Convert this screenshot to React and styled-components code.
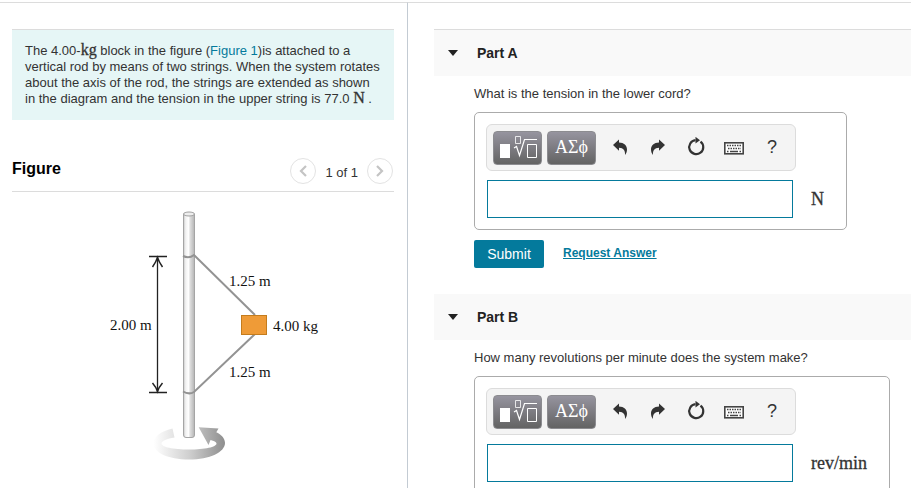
import React, { useState } from "react";
import styled, { createGlobalStyle, css } from "styled-components";

const GlobalStyle = createGlobalStyle`
  * {
    box-sizing: border-box;
  }
  body {
    margin: 0;
    background: #fff;
    color: #333;
    font-family: "Liberation Sans", Arial, sans-serif;
    font-size: 13px;
    line-height: 16px;
  }
  button, input {
    font-family: inherit;
  }
`;

const Page = styled.main`
  display: flex;
  height: 100vh;
  padding-top: 2px;
`;

const pane = css`
  border-top: 1px solid #dcdcdc;
  overflow-y: auto;
  scrollbar-width: none;
`;

const ProblemPane = styled.section`
  ${pane}
  flex: 0 0 408px;
  padding: 26px 13px 0 12px;
  border-right: 1px solid #c3cbd3;
`;

const AnswerPane = styled.section`
  ${pane}
  flex: 1;
  min-width: 0;
  padding: 26px 0 0 26px;
`;

const Intro = styled.p`
  margin: 0;
  padding: 13px;
  border-top: 1px solid #dcdcdc;
  background: #e6f6f6;
`;

const IntroLink = styled.a`
  color: #047a9c;
  text-decoration: none;
`;

const MathText = styled.span`
  font-family: "Liberation Serif", serif;
  font-size: ${(props) => (props.$large ? 18 : 16)}px;
  line-height: 1px;
  -webkit-text-stroke: 0.3px currentColor;
`;

const FigureHeader = styled.header`
  display: flex;
  align-items: center;
  justify-content: space-between;
  margin-top: 38px;
  padding: 0 1px 7px 0;
  border-bottom: 1px solid #dcdcdc;
`;

const FigureTitle = styled.h2`
  margin: 0;
  padding-bottom: 4px;
  color: #000;
  font-size: 16px;
  line-height: 20px;
`;

const Pager = styled.nav`
  display: flex;
  align-items: center;
  gap: 9px;
`;

const PagerCount = styled.span`
  padding-top: 4px;
`;

const PagerButton = styled.button`
  display: flex;
  align-items: center;
  justify-content: center;
  width: 26px;
  height: 26px;
  padding: 0;
  border: 1px solid #e3e3e3;
  border-radius: 50%;
  background: #fff;
`;

const Drawing = styled.svg`
  display: block;
  width: 100%;
  font-family: "Liberation Serif", serif;
  font-size: 15px;
`;

const Part = styled.section`
  margin-bottom: 26px;
`;

const PartHeader = styled.h2`
  margin: 0;
  border-top: ${(props) => (props.$first ? "1px solid #dcdcdc" : "0")};
  background: #f9f9f9;
  font-size: 14px;
`;

const PartToggle = styled.button`
  display: flex;
  align-items: center;
  gap: 19px;
  width: 100%;
  height: 46px;
  padding: 0 14px;
  border: 0;
  background: none;
  color: #222;
  font-size: 14px;
  font-weight: bold;
`;

const Caret = styled.span`
  border: 5px solid transparent;
  border-top: 6px solid #222;
  border-bottom: 0;
`;

const PartBody = styled.form`
  padding: 10px 0 0 40px;
`;

const Question = styled.label`
  display: block;
  margin-bottom: 10px;
`;

const AnswerBox = styled.div`
  width: fit-content;
  padding: 11px 22px 11px 11px;
  border: 1px solid #ababab;
  border-radius: 5px;
`;

const Toolbar = styled.div`
  display: flex;
  align-items: center;
  gap: 5px;
  width: 310px;
  height: 47px;
  padding: 0 0 0 6px;
  border: 1px solid #dcdcdc;
  border-radius: 6px;
  background: #f4f4f4;
`;

const PaletteButton = styled.button`
  display: flex;
  flex-shrink: 0;
  align-items: center;
  justify-content: center;
  width: 49px;
  height: 34px;
  padding: 0 0 1px;
  border: 1px solid #8c8c90;
  border-radius: 4px;
  background: linear-gradient(#96949f, #636363);
  color: #fff;
  font-family: "Liberation Serif", serif;
  font-size: 18px;
`;

const ToolGroup = styled.div`
  display: flex;
`;

const ToolButton = styled.button`
  display: flex;
  align-items: center;
  justify-content: center;
  width: 38px;
  height: 34px;
  padding: 0 0 1px;
  border: 0;
  background: none;
  color: #333;
  font-size: 18px;
`;

const AnswerRow = styled.div`
  display: flex;
  align-items: center;
  gap: 18px;
  margin: 9px 0 0 1px;
`;

const AnswerInput = styled.input`
  width: 306px;
  height: 38px;
  padding: 0 8px;
  border: 1px solid #047a9c;
  border-radius: 0;
  background: #fff;
  font-size: 14px;
`;

const Actions = styled.div`
  display: flex;
  align-items: center;
  gap: 19px;
  margin-top: 10px;
`;

const SubmitButton = styled.button`
  width: 70px;
  height: 28px;
  padding: 0;
  border: 0;
  border-radius: 2px;
  background: #047a9c;
  color: #fff;
  font-size: 14px;
`;

const RequestLink = styled.a`
  padding-bottom: 3px;
  color: #047a9c;
  font-size: 12px;
  font-weight: bold;
`;

const Chevron = ({ left }) => (
  <svg width="8" height="12" viewBox="0 0 8 12" fill="none" stroke="#c4c4c4" strokeWidth="2.2">
    <path d={left ? "M7 1L2 6L7 11" : "M1 1L6 6L1 11"} />
  </svg>
);

const TemplateIcon = () => (
  <svg width="40" height="24" viewBox="0 0 40 24" fill="none" stroke="#fff">
    <path d="M2 9H12V23H2Z" fill="#fff" stroke="none" />
    <path d="M17.5 1.5H22.5V8.5H17.5Z" strokeWidth=".8" />
    <path d="M16 13L18.500 11.500L21.500 20.500L26.500 4.500H39" strokeWidth="1.2" />
    <path d="M29.500 9.500H38.500V22.500H29.500Z" />
  </svg>
);

const UndoIcon = ({ flip }) => (
  <svg width="14" height="17" viewBox="0 0 14 17" fill="#333">
    <path
      transform={flip ? "translate(14 0) scale(-1 1)" : undefined}
      d="M0 6L6 .5V3.500C11 3.500 14 6.500 14 10.500C14 12.500 13.300 14.500 12 16C12.400 11.500 10.500 9 6 8.800V11.800Z"
    />
  </svg>
);

const ResetIcon = () => (
  <svg width="18" height="20" viewBox="0 1 18 20">
    <path d="M13.500 5.600A7 7 0 1 1 8.500 4.200" fill="none" stroke="#333" strokeWidth="2.200" />
    <path d="M8.500 0.800L13 4.300L8.500 7.500Z" fill="#333" />
  </svg>
);

const KeyboardIcon = () => (
  <svg width="20" height="16" viewBox="0 0 20 16" fill="none" stroke="#444">
    <rect x=".8" y="3.800" width="18.400" height="11" strokeWidth="1.600" fill="#fff" />
    <path d="M3 6.500H17" strokeWidth="1.500" strokeDasharray="1.500 1" />
    <path d="M4 9.500H17" strokeWidth="1.500" strokeDasharray="1.500 1" />
    <path d="M3 12.500H4.500M6 12.500H14M15.500 12.500H17" strokeWidth="1.500" />
  </svg>
);

const RodDrawing = () => (
  <Drawing viewBox="12 192 382 280" role="img" aria-label="Block held to a vertical rod by two strings">
    <defs>
      <linearGradient id="rod">
        <stop offset="0" stopColor="#c8c8c8" />
        <stop offset=".2" stopColor="#f2f2f2" />
        <stop offset=".45" stopColor="#fff" />
        <stop offset=".6" stopColor="#dedede" />
        <stop offset="1" stopColor="#b4b4b4" />
      </linearGradient>
      <linearGradient id="spin">
        <stop offset="0" stopColor="#fff" />
        <stop offset=".5" stopColor="#cfcfcf" />
        <stop offset="1" stopColor="#8e8e8e" />
      </linearGradient>
    </defs>

    {/* rotation arrow */}
    <path
      d="M172.500 428.500C160 431.500 153.500 437 153.500 443.500C153.500 452.500 168 459.500 189 459.500C210 459.500 225 452 225 443C225 439 222 435 216.300 432.300L218.500 428.500L198.700 427.300L208.500 445L210.500 440C214 441 216.500 442 216.500 443.500C216.500 447 205 449.500 189 449.500C173 449.500 161.500 447 161.500 443.500C161.500 441 167 438.500 174.500 437.500Z"
      fill="url(#spin)"
    />

    {/* rod */}
    <path d="M183.500 214V435Q183.500 437.500 186 437.500H192Q194.500 437.500 194.500 435V214Z" fill="url(#rod)" stroke="#a5a5a5" />
    <ellipse cx="189" cy="214" rx="5.500" ry="2" fill="#eee" stroke="#a0a0a0" />

    {/* strings */}
    <g fill="none" stroke="#939393" strokeWidth="2">
      <path d="M183 256Q189 259 194 255L255 315" />
      <path d="M183 391.500Q189 395 194 392L255 334" />
    </g>
    <rect x="241.500" y="315.500" width="25" height="19" fill="#ef9b37" stroke="#c47c1d" />

    {/* height marker */}
    <g fill="none" stroke="#222">
      <path d="M149 256.500H167M149 392.500H167" strokeWidth="1.300" />
      <path d="M157.500 257V392" strokeWidth="1.300" />
      <path d="M152.500 267Q156 262 157.500 257.500Q159 262 162.500 267M152.500 383Q156 387 157.500 391.500Q159 387 162.500 383" strokeWidth="1.500" />
    </g>

    <g fill="#111">
      <text x="110" y="330">2.00 m</text>
      <text x="229" y="286">1.25 m</text>
      <text x="273" y="331">4.00 kg</text>
      <text x="229" y="377">1.25 m</text>
    </g>
  </Drawing>
);

const AnswerPart = ({ id, title, question, unit, first, children }) => {
  const [open, setOpen] = useState(true);

  return (
    <Part>
      <PartHeader $first={first}>
        <PartToggle type="button" aria-expanded={open} onClick={() => setOpen(!open)}>
          <Caret />
          {title}
        </PartToggle>
      </PartHeader>
      {open && (
        <PartBody onSubmit={(e) => e.preventDefault()}>
          <Question htmlFor={id}>{question}</Question>
          <AnswerBox>
            <Toolbar>
              <PaletteButton type="button" aria-label="Templates">
                <TemplateIcon />
              </PaletteButton>
              <PaletteButton type="button">ΑΣϕ</PaletteButton>
              <ToolGroup>
                <ToolButton type="button" aria-label="Undo"><UndoIcon /></ToolButton>
                <ToolButton type="button" aria-label="Redo"><UndoIcon flip /></ToolButton>
                <ToolButton type="button" aria-label="Reset"><ResetIcon /></ToolButton>
                <ToolButton type="button" aria-label="Keyboard"><KeyboardIcon /></ToolButton>
                <ToolButton type="button">?</ToolButton>
              </ToolGroup>
            </Toolbar>
            <AnswerRow>
              <AnswerInput id={id} type="text" />
              <MathText $large>{unit}</MathText>
            </AnswerRow>
          </AnswerBox>
          {children}
        </PartBody>
      )}
    </Part>
  );
};

const App = () => {
  return (
    <>
      <GlobalStyle />
      <Page>
        <ProblemPane>
          <Intro>
            The 4.00-<MathText>kg</MathText> block in the figure (
            <IntroLink href="#figure">Figure 1</IntroLink>)is attached to a
            vertical rod by means of two strings. When the system rotates about
            the axis of the rod, the strings are extended as shown in the
            diagram and the tension in the upper string is 77.0{" "}
            <MathText>N</MathText> .
          </Intro>
          <FigureHeader id="figure">
            <FigureTitle>Figure</FigureTitle>
            <Pager>
              <PagerButton type="button" aria-label="Previous figure"><Chevron left /></PagerButton>
              <PagerCount>1 of 1</PagerCount>
              <PagerButton type="button" aria-label="Next figure"><Chevron /></PagerButton>
            </Pager>
          </FigureHeader>
          <RodDrawing />
        </ProblemPane>
        <AnswerPane>
          <AnswerPart
            first
            id="part-a"
            title="Part A"
            question="What is the tension in the lower cord?"
            unit="N"
          >
            <Actions>
              <SubmitButton type="submit">Submit</SubmitButton>
              <RequestLink href="#answer">Request Answer</RequestLink>
            </Actions>
          </AnswerPart>
          <AnswerPart
            id="part-b"
            title="Part B"
            question="How many revolutions per minute does the system make?"
            unit="rev/min"
          />
        </AnswerPane>
      </Page>
    </>
  );
};

export default App;
